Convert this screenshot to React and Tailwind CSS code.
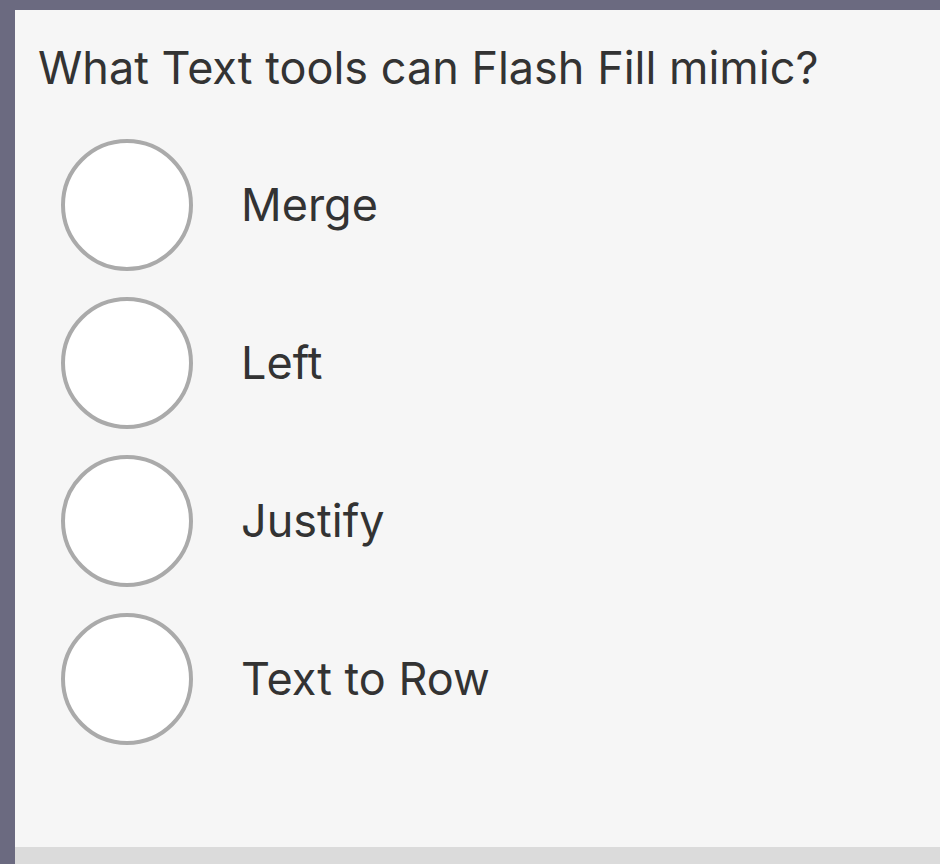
export default function App() {
  const options = ['Merge', 'Left', 'Justify', 'Text to Row']

  return (
    <div className="w-[940px] h-[864px] overflow-hidden bg-[#6b6a80] pl-[15px] pt-[10px] font-['Inter',sans-serif] text-[#333333]">
      <div className="flex flex-col h-full bg-[#f6f6f6]">
        <div className="flex-1">
          <h1 className="pl-[23px] pt-[26px] text-[45px] leading-[64px] font-normal">
            What Text tools can Flash Fill mimic?
          </h1>
          <div className="flex flex-col gap-[26px] pt-[39px] pl-[46px]">
            {options.map((opt) => (
              <label key={opt} className="flex items-center gap-[48px]">
                <span className="w-[132px] h-[132px] rounded-full border-4 border-[#aaaaaa] bg-white flex-shrink-0" />
                <span className="text-[45px] leading-[56px]">{opt}</span>
              </label>
            ))}
          </div>
        </div>
        <div className="h-[17px] bg-[#dbdbdb]" />
      </div>
    </div>
  )
}
